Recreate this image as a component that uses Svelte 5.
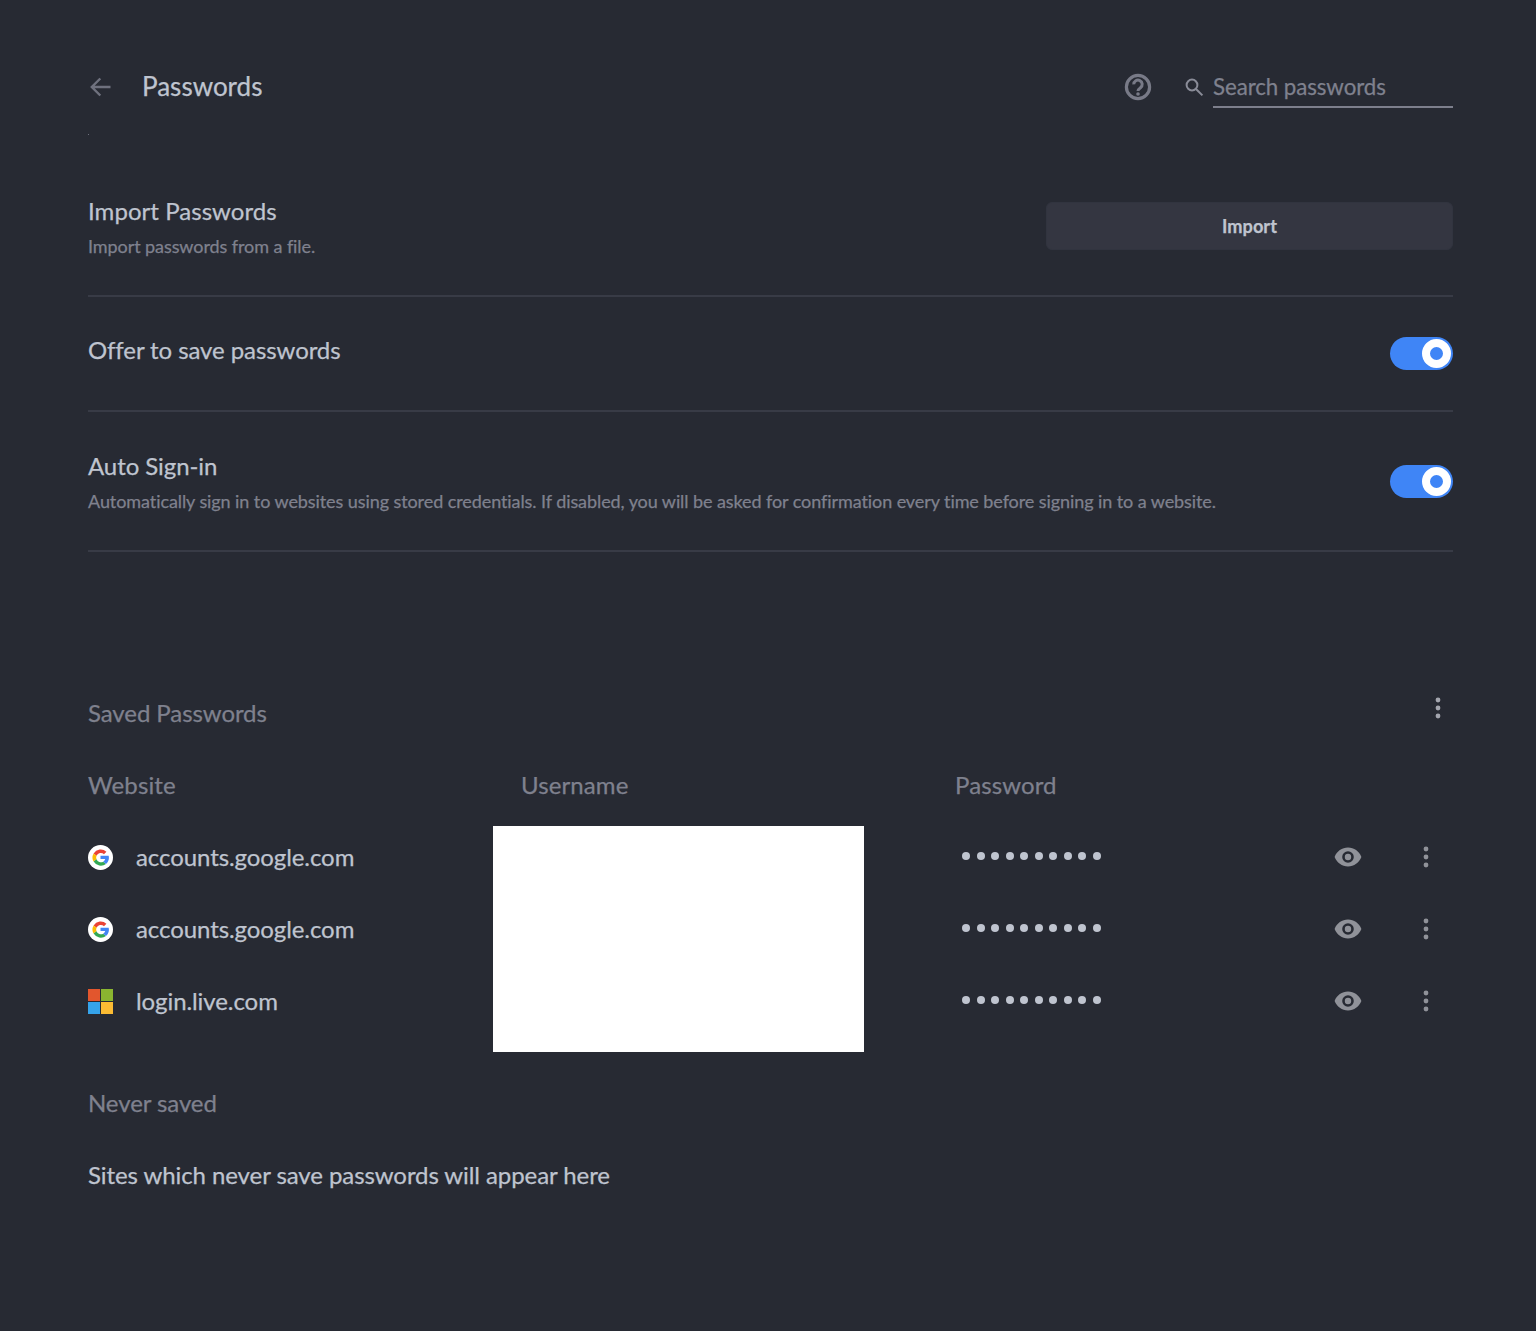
<script>
	const saved = [
		{ site: 'accounts.google.com', icon: 'google' },
		{ site: 'accounts.google.com', icon: 'google' },
		{ site: 'login.live.com', icon: 'ms' }
	];
	const dots = Array(10).fill(0);
</script>

{#snippet kebab()}
	<svg width="24" height="24" viewBox="0 0 24 24" fill="currentColor">
		<circle cx="12" cy="4" r="2.4" />
		<circle cx="12" cy="12" r="2.4" />
		<circle cx="12" cy="20" r="2.4" />
	</svg>
{/snippet}

<main>
	<header class="top">
		<svg class="back" width="24" height="24" viewBox="0 0 24 24" fill="none" stroke="currentColor" stroke-width="2.4">
			<path d="M22.500 12H4M12.300 3.500 3.800 12l8.500 8.500" />
		</svg>
		<h1>Passwords</h1>
		<svg class="help" width="28" height="28" viewBox="0 0 28 28" fill="none" stroke="currentColor">
			<circle cx="14" cy="14" r="11.600" stroke-width="3.200" />
			<path d="M9.800 11.400a4.200 4.200 0 1 1 6.700 3.300c-1.500 1.100-2.500 1.700-2.500 3.400" stroke-width="3" />
			<circle cx="14" cy="21" r="1.800" fill="currentColor" stroke="none" />
		</svg>
		<svg class="glass" width="20" height="20" viewBox="0 0 20 20" fill="none" stroke="currentColor" stroke-width="2">
			<circle cx="8" cy="8" r="5.400" />
			<path d="M12 12l6.400 6.400" />
		</svg>
		<div class="search">Search passwords</div>
	</header>
	<i class="speck"></i>

	<section class="row import">
		<div>
			<h2>Import Passwords</h2>
			<p>Import passwords from a file.</p>
		</div>
		<button>Import</button>
	</section>

	<section class="row offer">
		<h2>Offer to save passwords</h2>
		<span class="toggle"><b></b></span>
	</section>

	<section class="row auto">
		<div>
			<h2>Auto Sign-in</h2>
			<p>Automatically sign in to websites using stored credentials. If disabled, you will be asked for confirmation every time before signing in to a website.</p>
		</div>
		<span class="toggle"><b></b></span>
	</section>

	<div class="saved-head">
		<h3>Saved Passwords</h3>
		<span class="more">{@render kebab()}</span>
	</div>

	<div class="table">
		<div class="cols">
			<span>Website</span>
			<span>Username</span>
			<span>Password</span>
		</div>
		{#each saved as item}
			<div class="entry">
				<div class="site">
					{#if item.icon === 'google'}
						<svg width="25" height="25" viewBox="0 0 25 25">
							<circle cx="12.500" cy="12.500" r="12.500" fill="#fff" />
							<path d="M18.400 6.700a8.400 8.400 0 0 0-12.800 1.700l2.900 2.300a4.800 4.800 0 0 1 7.500-1.500z" fill="#ea4335" />
							<path d="M5.600 8.400a8.400 8.400 0 0 0 0 8.200l2.900-2.300a4.800 4.800 0 0 1 0-3.600z" fill="#fbbc05" />
							<path d="M5.600 16.600a8.400 8.400 0 0 0 12.400 2.300l-2.800-2.200a4.800 4.800 0 0 1-6.700-2.400z" fill="#34a853" />
							<path d="M20.700 10.700h-8.200v3.400h4.700a4 4 0 0 1-2 2.600l2.800 2.200a8.400 8.400 0 0 0 2.700-8.200z" fill="#4285f4" />
						</svg>
					{:else}
						<svg width="25" height="25" viewBox="0 0 25 25">
							<rect width="12" height="12" fill="#e2562d" />
							<rect x="13" width="12" height="12" fill="#8ab530" />
							<rect y="13" width="12" height="12" fill="#35a3ea" />
							<rect x="13" y="13" width="12" height="12" fill="#fbbb33" />
						</svg>
					{/if}
					<span>{item.site}</span>
				</div>
				<div></div>
				<div class="pass">
					<div class="dots">
						{#each dots as _}<i></i>{/each}
					</div>
					<svg class="eye" width="28" height="20" viewBox="0 0 28 20">
						<path fill-rule="evenodd" d="M14 .6C8 .6 2.800 4.300.6 10c2.200 5.700 7.400 9.400 13.400 9.400S25.200 15.700 27.400 10C25.200 4.300 20 .6 14 .6zm0 15.200a5.800 5.800 0 1 1 0-11.600 5.800 5.800 0 0 1 0 11.600zm0-9a3.200 3.200 0 1 0 0 6.400 3.200 3.200 0 0 0 0-6.400z" fill="currentColor" />
					</svg>
					<span class="row-more">{@render kebab()}</span>
				</div>
			</div>
		{/each}
		<div class="mask"></div>
	</div>

	<h3 class="never">Never saved</h3>
	<p class="empty">Sites which never save passwords will appear here</p>
</main>

<style>
	:global(body) {
		background: #272a33;
	}

	main {
		box-sizing: border-box;
		height: 1331px;
		padding: 0 83px 0 88px;
		background: #272a33;
		color: #bfc4cf;
		font-family: Lato, sans-serif;
		letter-spacing: -0.08px;
		-webkit-text-stroke: 0.25px;
	}

	h1, h2, h3, p {
		margin: 0;
		font-weight: 400;
	}

	.top {
		display: flex;
		align-items: center;
		height: 40px;
		padding-top: 67px;
	}

	.back {
		color: #6f717e;
		margin-right: 30px;
		flex: none;
	}

	h1 {
		font-size: 26px;
		line-height: 38px;
		margin-bottom: 2px;
		letter-spacing: 0;
		color: #bfc4cf;
		flex: 1;
	}

	.help {
		color: #787a87;
		margin-right: 32px;
	}

	.glass {
		color: #8a8c98;
		margin-right: 9px;
	}

	.search {
		width: 240px;
		height: 41px;
		margin-top: 1px;
		box-sizing: border-box;
		border-bottom: 2px solid #7d7f8c;
		font-size: 22.300px;
		line-height: 40px;
		color: #7f818e;
	}

	.speck {
		display: block;
		width: 1px;
		height: 1px;
		margin-top: 27px;
		background: #6f717e;
	}

	.row {
		display: flex;
		justify-content: space-between;
		align-items: center;
		border-bottom: 2px solid #383b46;
		box-sizing: border-box;
	}

	.row h2 {
		font-size: 24px;
		line-height: 36px;
		color: #bfc4cf;
	}

	.row p {
		font-size: 18px;
		line-height: 34px;
		color: #7f818e;
	}

	.import {
		margin-top: 59px;
		height: 103px;
		padding-bottom: 30px;
		align-items: flex-start;
	}

	.row.import h2 {
		margin-top: -1px;
		letter-spacing: 0.05px;
	}

	.import button {
		width: 407px;
		height: 48px;
		margin-top: 8px;
		border: 1px solid #31343f;
		border-radius: 6px;
		background: #343641;
		color: #bfc4cf;
		font: 700 18.200px Lato, sans-serif;
	}

	.offer {
		height: 115px;
	}

	.row.offer h2 {
		margin-bottom: 8px;
	}

	.auto {
		height: 140px;
	}

	.auto > div {
		padding-top: 3px;
	}

	.toggle {
		display: block;
		width: 63px;
		height: 33px;
		border-radius: 17px;
		background: #3f85f6;
		position: relative;
		flex: none;
	}

	.toggle b {
		position: absolute;
		right: 2px;
		top: 2px;
		box-sizing: border-box;
		width: 29px;
		height: 29px;
		border-radius: 50%;
		border: 8px solid #fff;
		background: #3f85f6;
	}

	.saved-head {
		display: flex;
		justify-content: space-between;
		margin-top: 143px;
		height: 36px;
	}

	h3 {
		font-size: 24px;
		line-height: 36px;
		color: #7f818e;
	}

	.more {
		color: #a3a5ae;
		margin: 1px 3px 0 0;
	}

	.table {
		position: relative;
		margin-top: 36px;
	}

	.cols, .entry {
		display: grid;
		grid-template-columns: 433px 434px 1fr;
		align-items: center;
	}

	.cols {
		height: 36px;
		margin-bottom: 18px;
		font-size: 24px;
		letter-spacing: 0.1px;
		line-height: 34px;
		color: #7f818e;
	}

	.entry {
		height: 72px;
		font-size: 24px;
		color: #bfc4cf;
	}

	.site {
		display: flex;
		align-items: center;
		gap: 23px;
	}

	.site span {
		margin-bottom: 2px;
	}

	.pass {
		display: flex;
		align-items: center;
		padding-left: 7px;
	}

	.dots {
		display: flex;
		gap: 6.500px;
		width: 372px;
		margin-top: -3px;
	}

	.dots i {
		width: 8px;
		height: 8px;
		border-radius: 50%;
		background: #bfc4cf;
	}

	.eye {
		color: #909299;
		margin-right: 52px;
	}

	.row-more {
		color: #909299;
		display: flex;
	}

	.mask {
		position: absolute;
		left: 405px;
		top: 59px;
		width: 371px;
		height: 226px;
		background: #fff;
	}

	.never {
		margin-top: 48px;
	}

	.empty {
		margin-top: 36px;
		font-size: 24px;
		line-height: 36px;
		color: #bfc4cf;
	}
</style>
